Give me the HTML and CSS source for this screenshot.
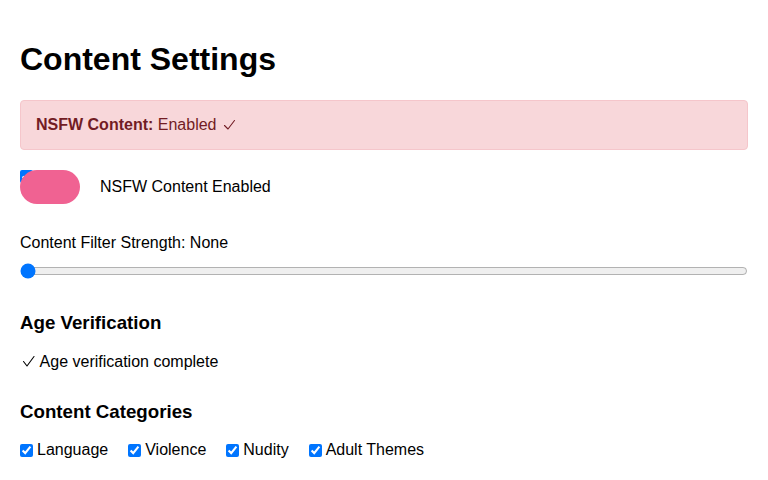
FILE: index.html
```html
<!DOCTYPE html>
<html lang="en">
<head>
<meta charset="utf-8">
<title>Content Settings</title>
<link rel="stylesheet" href="styles.css">
</head>
<body>
<h1 class="title">Content Settings</h1>

<div class="alert"><strong>NSFW Content:</strong> Enabled <svg class="check" viewBox="0 0 16 12" width="16" height="12" aria-label="check"><path d="M3.5 7.5 L7 11 L13.5 2.5"/></svg></div>

<div class="toggle-row">
  <label class="switch">
    <input type="checkbox" checked>
    <span class="slider"></span>
  </label>
  <span class="toggle-label">NSFW Content Enabled</span>
</div>

<div class="filter">
  <label class="filter-label" for="strength">Content Filter Strength: None</label>
  <input class="range" id="strength" type="range" min="0" max="3" value="0">
</div>

<div class="section">
  <h3 class="section-title">Age Verification</h3>
  <div class="verified"><svg class="check" viewBox="0 0 16 12" width="16" height="12" aria-label="check"><path d="M3.5 6.5 L7 11 L14 1.5"/></svg> Age verification complete</div>
</div>

<div class="section">
  <h3 class="section-title">Content Categories</h3>
  <div class="categories">
    <label class="cat"><input type="checkbox" checked>Language</label>
    <label class="cat"><input type="checkbox" checked>Violence</label>
    <label class="cat"><input type="checkbox" checked>Nudity</label>
    <label class="cat"><input type="checkbox" checked>Adult Themes</label>
  </div>
</div>
</body>
</html>
```

FILE: styles.css
```css
html, body {
  background: #ffffff;
}
body {
  margin: 0;
  padding: 20px;
  font-family: "Liberation Sans", Arial, sans-serif;
  font-size: 16px;
  color: #000;
}
.title {
  font-size: 32px;
  font-weight: bold;
  margin: 21px 0 22px;
}
.alert {
  background: #f8d7da;
  border: 1px solid #f5c6cb;
  color: #721c24;
  border-radius: 4px;
  padding: 15px;
  margin-bottom: 20px;
}
.check {
  display: inline-block;
  vertical-align: baseline;
  fill: none;
  stroke: currentColor;
  stroke-width: 1.1;
  stroke-linecap: round;
  stroke-linejoin: round;
}
.toggle-row {
  display: flex;
  align-items: center;
  gap: 20px;
  margin-bottom: 30px;
}
.switch {
  position: relative;
  display: block;
  width: 60px;
  height: 34px;
}
.switch input {
  margin: 0;
  display: block;
}
.slider {
  position: absolute;
  inset: 0;
  background: #f06292;
  border-radius: 34px;
}
.filter {
  margin-bottom: 33px;
}
.filter-label {
  display: block;
  margin-bottom: 11px;
}
.range {
  display: block;
  width: 100%;
  margin: 2px 0;
}
.section {
  margin-bottom: 30px;
}
.section:last-child {
  margin-bottom: 0;
}
.section-title {
  font-size: 18.72px;
  margin: 18.72px 0;
}
.categories {
  display: flex;
  align-items: center;
  gap: 20px;
}
.cat {
  display: flex;
  align-items: center;
}
.cat input {
  margin: 0 4px 0 0;
}
```
